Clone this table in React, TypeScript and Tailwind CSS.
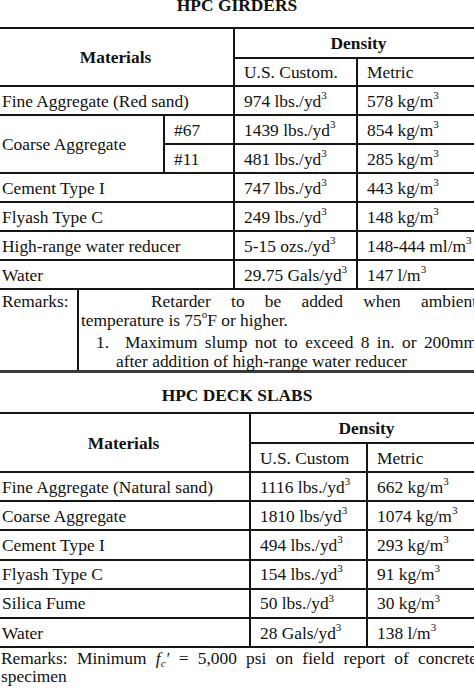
import React from "react";

const cell = "border-2 border-[#151515] p-0 align-middle";
const name = cell + " pl-[4px]";
const val = cell + " pl-[9px]";

const Cube = ({ v }: { v: string }) => (
  <>
    {v}
    <sup className="text-[11px] -top-[0.7em]">3</sup>
  </>
);

const deckRows: [string, string, string][] = [
  ["Fine Aggregate (Natural sand)", "1116 lbs./yd", "662 kg/m"],
  ["Coarse Aggregate", "1810 lbs/yd", "1074 kg/m"],
  ["Cement Type I", "494 lbs./yd", "293 kg/m"],
  ["Flyash Type C", "154 lbs./yd", "91 kg/m"],
  ["Silica Fume", "50 lbs./yd", "30 kg/m"],
  ["Water", "28 Gals/yd", "138 l/m"],
];

const girderRows: [string, string, string][] = [
  ["Cement Type I", "747 lbs./yd", "443 kg/m"],
  ["Flyash Type C", "249 lbs./yd", "148 kg/m"],
  ["High-range water reducer", "5-15 ozs./yd", "148-444 ml/m"],
  ["Water", "29.75 Gals/yd", "147 l/m"],
];

export default function App() {
  return (
    <div className="w-[474px] h-[688px] overflow-hidden bg-white text-[#111] font-['Liberation_Serif',serif] text-[17.4px] leading-[20px]">
      <div className="-ml-[4px] w-[486px]">
        {/* HPC girders */}
        <p className="-mt-[4px] mb-[12px] ml-[4px] w-[474px] text-center font-bold leading-[19px]">
          HPC GIRDERS
        </p>
        <table className="w-[486px] table-fixed border-collapse">
          <colgroup>
            <col className="w-[81px]" />
            <col className="w-[86px]" />
            <col className="w-[70px]" />
            <col className="w-[123px]" />
            <col className="w-[126px]" />
          </colgroup>
          <tbody>
            <tr className="h-[30px]">
              <td rowSpan={2} colSpan={3} className={cell + " text-center font-bold"}>
                Materials
              </td>
              <td colSpan={2} className={cell + " text-center font-bold"}>
                Density
              </td>
            </tr>
            <tr className="h-[28px]">
              <td className={val}>U.S. Custom.</td>
              <td className={val}>Metric</td>
            </tr>
            <tr className="h-[29px]">
              <td colSpan={3} className={name}>
                Fine Aggregate (Red sand)
              </td>
              <td className={val}>
                <Cube v="974 lbs./yd" />
              </td>
              <td className={val}>
                <Cube v="578 kg/m" />
              </td>
            </tr>
            <tr className="h-[29px]">
              <td rowSpan={2} colSpan={2} className={name}>
                Coarse Aggregate
              </td>
              <td className={val}>#67</td>
              <td className={val}>
                <Cube v="1439 lbs./yd" />
              </td>
              <td className={val}>
                <Cube v="854 kg/m" />
              </td>
            </tr>
            <tr className="h-[29px]">
              <td className={val}>#11</td>
              <td className={val}>
                <Cube v="481 lbs./yd" />
              </td>
              <td className={val}>
                <Cube v="285 kg/m" />
              </td>
            </tr>
            {girderRows.map(([m, us, si]) => (
              <tr key={m} className="h-[29px]">
                <td colSpan={3} className={name}>
                  {m}
                </td>
                <td className={val}>
                  <Cube v={us} />
                </td>
                <td className={val}>
                  <Cube v={si} />
                </td>
              </tr>
            ))}
            <tr className="h-[81px]">
              <td className={name + " align-top pt-[2px] leading-[18.5px] border-b-[3px] border-b-[#3a3a3a]"}>
                Remarks:
              </td>
              <td
                colSpan={4}
                className={cell + " align-top pt-[2px] pl-[2px] pr-[5px] leading-[18.5px] border-b-[3px] border-b-[#3a3a3a]"}
              >
                <div className="pl-[70px] text-justify [text-align-last:justify]">
                  Retarder to be added when ambient
                </div>
                <div>
                  temperature is 75<sup className="text-[11px] -top-[0.7em]">o</sup>F or higher.
                </div>
                <div className="mt-[4px] flex pl-[15px]">
                  <span className="w-[29px] shrink-0">1.</span>
                  <span className="flex-1 text-justify [text-align-last:justify]">
                    Maximum slump not to exceed 8 in. or 200mm
                  </span>
                </div>
                <div className="pl-[35px]">after addition of high-range water reducer</div>
              </td>
            </tr>
          </tbody>
        </table>

        {/* HPC deck slabs */}
        <p className="mt-[13px] mb-[7px] ml-[4px] w-[474px] text-center font-bold leading-[19px]">
          HPC DECK SLABS
        </p>
        <table className="w-[486px] table-fixed border-collapse">
          <colgroup>
            <col className="w-[253px]" />
            <col className="w-[117px]" />
            <col className="w-[116px]" />
          </colgroup>
          <tbody>
            <tr className="h-[30px]">
              <td rowSpan={2} className={cell + " text-center font-bold"}>
                Materials
              </td>
              <td colSpan={2} className={cell + " text-center font-bold"}>
                Density
              </td>
            </tr>
            <tr className="h-[29px]">
              <td className={val}>U.S. Custom</td>
              <td className={val}>Metric</td>
            </tr>
            {deckRows.map(([m, us, si]) => (
              <tr key={m} className="h-[29.2px]">
                <td className={name}>{m}</td>
                <td className={val}>
                  <Cube v={us} />
                </td>
                <td className={val}>
                  <Cube v={si} />
                </td>
              </tr>
            ))}
          </tbody>
        </table>
        <div className="px-[5px] pt-[2px] leading-[17.5px]">
          <div className="text-justify [text-align-last:justify]">
            Remarks: Minimum{" "}
            <span className="italic">
              f<sub className="text-[11px]">c</sub>′
            </span>{" "}
            = 5,000 psi on field report of concrete
          </div>
          <div>specimen</div>
        </div>
      </div>
    </div>
  );
}
